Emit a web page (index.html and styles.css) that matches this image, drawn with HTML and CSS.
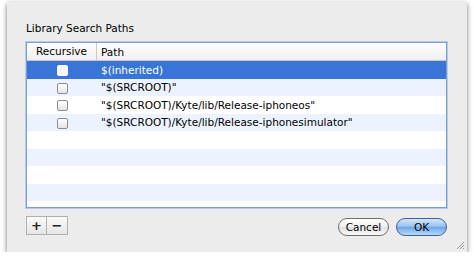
FILE: index.html
```html
<!DOCTYPE html>
<html lang="en">
<head>
    <meta charset="UTF-8">
    <title>Library Search Paths</title>
    <link rel="stylesheet" href="styles.css">
</head>
<body>
    <div class="sheet">
        <div class="sheet-title">Library Search Paths</div>
        <div class="paths-table">
            <div class="table-head">
                <div class="col-check">Recursive</div>
                <div class="col-path">Path</div>
            </div>
            <div class="table-row selected">
                <div class="col-check"><span class="box"></span></div>
                <div class="col-path">$(inherited)</div>
            </div>
            <div class="table-row alt">
                <div class="col-check"><span class="box"></span></div>
                <div class="col-path">"$(SRCROOT)"</div>
            </div>
            <div class="table-row">
                <div class="col-check"><span class="box"></span></div>
                <div class="col-path">"$(SRCROOT)/Kyte/lib/Release-iphoneos"</div>
            </div>
            <div class="table-row alt">
                <div class="col-check"><span class="box"></span></div>
                <div class="col-path">"$(SRCROOT)/Kyte/lib/Release-iphonesimulator"</div>
            </div>
            <div class="table-row"></div>
            <div class="table-row alt"></div>
            <div class="table-row"></div>
            <div class="table-row alt"></div>
            <div class="table-row"></div>
        </div>
        <div class="sheet-footer">
            <div class="seg">
                <button class="seg-btn">+</button>
                <button class="seg-btn">&minus;</button>
            </div>
            <div class="actions">
                <button class="pill">Cancel</button>
                <button class="pill default">OK</button>
            </div>
        </div>
        <svg class="grip" width="10" height="10" viewBox="0 0 10 10">
            <path d="M9 2 L2 9 M9 5 L5 9 M9 8 L8 9" stroke="#9a9a9a" stroke-width="1" fill="none"/>
        </svg>
    </div>
</body>
</html>
```

FILE: styles.css
```css
body {
    margin: 0;
    background: #fff;
    font-family: 'DejaVu Sans', 'Liberation Sans', sans-serif;
    font-size: 10.5px;
    color: #000;
}
.sheet {
    position: relative;
    width: 460px;
    height: 250px;
    margin: 2px 0 0 7px;
    padding: 19px 20px 0 19px;
    box-sizing: border-box;
    background: #ececec;
    box-shadow: 0 2px 5px rgba(0, 0, 0, 0.55);
}
.sheet-title {
    line-height: 14px;
    margin-bottom: 7px;
}
.paths-table {
    height: 166px;
    box-sizing: border-box;
    border: 1px solid #7a9ed4;
    box-shadow: 0 0 0 1px rgba(130, 165, 220, 0.45);
    background: #fff;
    overflow: hidden;
}
.table-head, .table-row {
    display: flex;
    align-items: center;
}
.table-head {
    height: 17px;
    background: linear-gradient(#ffffff, #efefef);
    border-bottom: 1px solid #c6c6c6;
}
.table-head .col-check {
    border-right: 1px solid #c8c8c8;
    height: 17px;
    line-height: 17px;
}
.col-check {
    width: 70px;
    flex: none;
    text-align: center;
    box-sizing: border-box;
}
.col-path {
    padding-left: 4px;
    white-space: nowrap;
}
.table-row {
    height: 17.5px;
}
.table-row.alt {
    background: #edf3fe;
}
.table-row.selected {
    background: #3875d7;
    color: #fff;
}
.box {
    display: inline-block;
    width: 9px;
    height: 9px;
    vertical-align: middle;
    border: 1px solid #8c8c8c;
    border-radius: 2px;
    background: linear-gradient(#ffffff, #e4e4e4);
}
.selected .box {
    border-color: #fff;
    background: #f6f6f6;
}
.sheet-footer {
    display: flex;
    justify-content: space-between;
    align-items: flex-start;
    margin-top: 8px;
}
.seg {
    display: flex;
}
.seg-btn {
    width: 21px;
    height: 19px;
    padding: 0;
    margin: 0;
    border: 1px solid #b0b0b0;
    background: linear-gradient(#fafafa, #e6e6e6);
    font-family: 'DejaVu Sans', sans-serif;
    font-size: 13px;
    font-weight: bold;
    line-height: 16px;
    color: #222;
}
.seg-btn + .seg-btn {
    border-left: none;
}
.actions {
    display: flex;
    gap: 7px;
    margin-top: 2px;
}
.pill {
    width: 51px;
    height: 18px;
    padding: 0;
    border: 1px solid #6e6e6e;
    border-radius: 9px;
    background: linear-gradient(#ffffff, #f0f0f0 50%, #e2e2e2 51%, #f8f8f8);
    font-family: 'DejaVu Sans', sans-serif;
    font-size: 10.5px;
    line-height: 16px;
    color: #000;
}
.pill.default {
    border-color: #3e5f95;
    background: linear-gradient(#d4e6fb, #9cc3ef 45%, #6fa6e6 52%, #b6dafa);
}
.grip {
    position: absolute;
    right: 2px;
    bottom: 2px;
}
```
